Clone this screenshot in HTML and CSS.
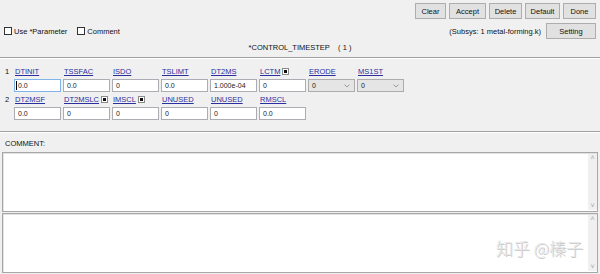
FILE: index.html
```html
<!DOCTYPE html>
<html lang="en">
<head>
  <meta charset="UTF-8" />
  <title>*CONTROL_TIMESTEP</title>
  <link rel="stylesheet" href="styles.css">
</head>
<body>
  <div class="window">
    <div class="toolbar">
      <button class="btn clear">Clear</button>
      <button class="btn accept">Accept</button>
      <button class="btn delete">Delete</button>
      <button class="btn default">Default</button>
      <button class="btn done">Done</button>
    </div>

    <div class="options">
      <label class="check"><span class="box"></span>Use *Parameter</label>
      <label class="check"><span class="box"></span>Comment</label>
      <span class="spacer"></span>
      <span class="subsys">(Subsys: 1 metal-forming.k)</span>
      <button class="btn setting">Setting</button>
    </div>

    <div class="title">*CONTROL_TIMESTEP    ( 1 )</div>
    <div class="groove"></div>

    <div class="card">
      <div class="card-row">
        <span class="num">1</span>
        <div class="cols">
          <div class="cell"><span class="lbl">DTINIT</span><div class="field focus"><span class="caret"></span>0.0</div></div>
          <div class="cell"><span class="lbl">TSSFAC</span><div class="field">0.0</div></div>
          <div class="cell"><span class="lbl">ISDO</span><div class="field">0</div></div>
          <div class="cell"><span class="lbl">TSLIMT</span><div class="field">0.0</div></div>
          <div class="cell"><span class="lbl">DT2MS</span><div class="field">1.000e-04</div></div>
          <div class="cell"><span class="lbl">LCTM</span><span class="pick"></span><div class="field">0</div></div>
          <div class="cell"><span class="lbl">ERODE</span><div class="select">0<svg viewBox="0 0 6 4" width="6" height="4"><path d="M0.5 0.5 L3 3 L5.5 0.5" fill="none" stroke="#888" stroke-width="0.8"/></svg></div></div>
          <div class="cell"><span class="lbl">MS1ST</span><div class="select">0<svg viewBox="0 0 6 4" width="6" height="4"><path d="M0.5 0.5 L3 3 L5.5 0.5" fill="none" stroke="#888" stroke-width="0.8"/></svg></div></div>
        </div>
      </div>
      <div class="card-row">
        <span class="num">2</span>
        <div class="cols">
          <div class="cell"><span class="lbl">DT2MSF</span><div class="field">0.0</div></div>
          <div class="cell"><span class="lbl">DT2MSLC</span><span class="pick"></span><div class="field">0</div></div>
          <div class="cell"><span class="lbl">IMSCL</span><span class="pick"></span><div class="field">0</div></div>
          <div class="cell"><span class="lbl">UNUSED</span><div class="field">0</div></div>
          <div class="cell"><span class="lbl">UNUSED</span><div class="field">0</div></div>
          <div class="cell"><span class="lbl">RMSCL</span><div class="field">0.0</div></div>
        </div>
      </div>
    </div>

    <div class="groove lower"></div>
    <div class="comment-label">COMMENT:</div>

    <div class="memo">
      <div class="memo-body"></div>
      <div class="scroll"><span>&#x2C4;</span><span>&#x2C5;</span></div>
    </div>
    <div class="memo second">
      <div class="memo-body"></div>
      <div class="scroll"><span>&#x2C4;</span><span>&#x2C5;</span></div>
      <div class="watermark">知乎 @榛子</div>
    </div>
  </div>
</body>
</html>
```

FILE: styles.css
```css
* {
  box-sizing: border-box;
}
body {
  margin: 0;
  background: #f0f0f0;
  font-family: "Liberation Sans", Arial, sans-serif;
  font-size: 7.5px;
  color: #111;
}
.window {
  width: 600px;
  height: 274px;
  overflow: hidden;
}
.toolbar {
  display: flex;
  justify-content: flex-end;
  gap: 3px;
  padding: 3px 4px 0 0;
}
.btn {
  height: 16px;
  padding: 0;
  background: #e1e1e1;
  border: 1px solid #adadad;
  font-family: inherit;
  font-size: 7.5px;
  color: #111;
}
.clear { width: 31px; }
.accept { width: 37px; }
.delete { width: 33px; }
.default { width: 35px; }
.done { width: 33px; }
.setting { width: 50px; margin-left: 5px; }

.options {
  display: flex;
  align-items: center;
  height: 16px;
  margin-top: 4px;
  padding: 0 4px 0 4px;
}
.check {
  display: flex;
  align-items: center;
  margin-right: 10px;
}
.check .box {
  width: 8px;
  height: 8px;
  margin-right: 2px;
  background: #fff;
  border: 1px solid #333;
}
.spacer {
  flex: 1;
}

.title {
  height: 18px;
  line-height: 18px;
  text-align: center;
  white-space: pre;
}
.groove {
  height: 2px;
  border-top: 1px solid #a0a0a0;
  border-bottom: 1px solid #fff;
  margin-bottom: 7px;
}
.groove.lower {
  margin: 11px 0 0;
}

.card-row {
  display: flex;
  margin-bottom: 2px;
}
.num {
  width: 14px;
  padding-left: 5px;
  line-height: 11px;
}
.cols {
  display: grid;
  grid-template-columns: repeat(8, 47px);
  column-gap: 2px;
}
.cell {
  display: flex;
  flex-wrap: wrap;
  align-items: center;
}
.lbl {
  height: 11px;
  line-height: 11px;
  padding-left: 1px;
  color: #2a2f9e;
  text-decoration: underline;
}
.pick {
  position: relative;
  width: 7px;
  height: 7px;
  margin-left: 2px;
  background: #fff;
  border: 1px solid #8a8a8a;
}
.pick::after {
  content: "";
  position: absolute;
  left: 1px;
  top: 1px;
  width: 3px;
  height: 3px;
  background: #111;
}
.field,
.select {
  display: flex;
  align-items: center;
  width: 47px;
  height: 13px;
  margin-top: 2px;
  padding-left: 3px;
  font-size: 7px;
  background: #fff;
  border: 1px solid #abadb3;
  color: #222;
}
.field.focus {
  padding-left: 1px;
  border-color: #7eb4ea;
}
.caret {
  width: 1px;
  height: 9px;
  margin-right: 1px;
  background: #000;
}
.select {
  justify-content: space-between;
  padding-right: 4px;
  background: #e5e5e5;
  border-color: #acacac;
}

.comment-label {
  padding: 5px 0 0 5px;
  line-height: 12px;
  margin-bottom: 2px;
}
.memo {
  position: relative;
  display: flex;
  height: 60px;
  margin: 0 2px;
  background: #fff;
  border: 1px solid #a7a7a7;
  box-shadow: inset 1px 1px 0 #e2e2e2;
}
.memo.second {
  margin-top: 1px;
}
.memo-body {
  flex: 1;
}
.scroll {
  display: flex;
  flex-direction: column;
  justify-content: space-between;
  align-items: center;
  width: 9px;
  margin: 1px 0;
  background: #f0f0f0;
  color: #a6a6a6;
  font-size: 7px;
  line-height: 8px;
}
.watermark {
  position: absolute;
  right: 14px;
  bottom: 12px;
  font-family: "Noto Sans CJK SC", sans-serif;
  font-size: 17px;
  font-weight: 300;
  color: #e6e6e6;
  text-shadow: 1px 1px 0 #c4c4c4, -1px -1px 0 #fff;
}
```
